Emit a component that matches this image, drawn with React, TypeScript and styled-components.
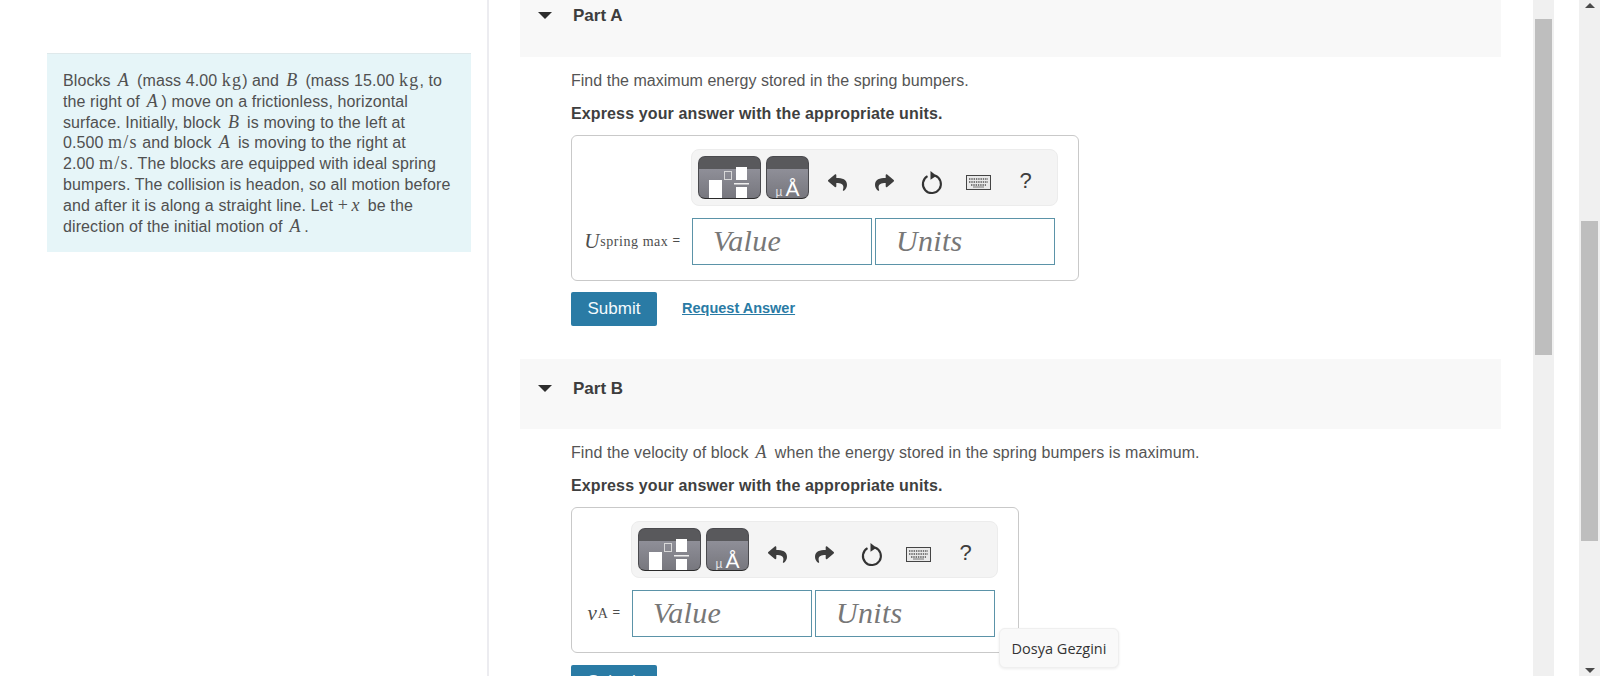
import React from "react";
import styled, { createGlobalStyle } from "styled-components";
import { FaReply, FaShare } from "react-icons/fa";

const GlobalStyle = createGlobalStyle`
  html, body {
    margin: 0;
    padding: 0;
    height: 676px;
    overflow: hidden;
    background: #fff;
    font-family: "Liberation Sans", Arial, sans-serif;
    color: #4a4a4a;
  }
`;

const Page = styled.div`
  position: relative;
  display: flex;
  width: 1600px;
  height: 676px;
  overflow: hidden;
`;

const Aside = styled.aside`
  width: 487px;
  flex: none;
  padding: 53px 16px 0 47px;
  box-sizing: border-box;
`;

const Scenario = styled.div`
  height: 199px;
  box-sizing: border-box;
  padding: 17px 0 0 16px;
  background: #e6f5f8;
  border-top: 1px solid #dfe9eb;
  font-size: 16px;
  letter-spacing: 0.1px;
  color: #505050;
`;

const Line = styled.div`
  height: 20.8px;
  line-height: 20.8px;
  white-space: nowrap;
`;

const Tex = styled.span`
  font-family: "Liberation Serif", "Times New Roman", serif;
  font-size: 18px;
  line-height: 0;
  letter-spacing: 1.2px;
`;

const TexItalic = styled(Tex)`
  font-style: italic;
  padding: 0 2.5px;
`;

const Main = styled.main`
  width: 1013px;
  flex: none;
  height: 676px;
  border-left: 2px solid #ececf0;
  padding-left: 31px;
  overflow: hidden;
`;

const Part = styled.section`
  width: 981px;
`;

const PartHeader = styled.header<{ $cut?: boolean }>`
  display: flex;
  align-items: flex-start;
  height: 70px;
  margin-top: ${(p) => (p.$cut ? "-13px" : "0")};
  padding-top: ${(p) => (p.$cut ? "19px" : "20px")};
  box-sizing: border-box;
  background: #f8f8f8;
  font-size: 17px;
  line-height: 20px;
  font-weight: 700;
  color: #3d3d3d;
`;

const Caret = styled.span`
  width: 0;
  height: 0;
  margin: 6px 21px 0 18px;
  border-left: 7px solid transparent;
  border-right: 7px solid transparent;
  border-top: 7px solid #2d2d2d;
`;

const PartBody = styled.div`
  padding: 14px 0 0 51px;
`;

const Prompt = styled.p<{ $spacing: number }>`
  margin: 0;
  font-size: 16px;
  line-height: 20px;
  letter-spacing: ${(p) => p.$spacing}px;
  color: #555;
`;

const Instruction = styled.p`
  margin: 12.5px 0 0;
  font-size: 16px;
  line-height: 20px;
  letter-spacing: 0.13px;
  font-weight: 700;
  color: #3f3f3f;
`;

const AnswerBox = styled.div`
  display: inline-flex;
  align-items: flex-end;
  margin-top: 11.5px;
  padding: 13px 20px 15px 0;
  border: 1px solid #c9c9c9;
  border-radius: 6px;
  box-sizing: border-box;
  height: 146px;
`;

const AnswerLabel = styled.div<{ $width: number }>`
  display: flex;
  justify-content: flex-end;
  align-items: center;
  box-sizing: border-box;
  width: ${(p) => p.$width}px;
  height: 47px;
  padding-right: 11px;
  white-space: nowrap;
  color: #4d4d4d;
  font-family: "Liberation Serif", "Times New Roman", serif;
  font-size: 21px;
`;

const Sub = styled.sub`
  font-size: 14px;
  line-height: 0;
  letter-spacing: 0.55px;
  vertical-align: -4px;
  font-style: normal;
  margin-left: 1px;
`;

const Equals = styled.span`
  font-family: "Liberation Sans", Arial, sans-serif;
  font-size: 13px;
  margin-left: 4px;
  position: relative;
  top: -2px;
`;

const Editor = styled.div`
  display: flex;
  flex-direction: column;
  gap: 12px;
`;

const Toolbar = styled.div`
  display: flex;
  align-items: center;
  width: 367px;
  height: 57px;
  box-sizing: border-box;
  padding-left: 6px;
  background: #f4f4f4;
  border: 1px solid #ececec;
  border-radius: 8px;
`;

const TemplateButton = styled.div<{ $width: number }>`
  display: flex;
  align-items: flex-end;
  justify-content: center;
  width: ${(p) => p.$width}px;
  height: 43px;
  margin-right: 5px;
  box-sizing: border-box;
  border-radius: 7px;
  border: 1px solid #4a4a4e;
  border-bottom: 1.5px solid #2a2a2a;
  overflow: hidden;
  background: linear-gradient(#59595c 0 12px, #8f8f98 12px, #77777e 100%);
`;

const UnitGlyphs = styled.span`
  font-family: "Liberation Sans", Arial, sans-serif;
  color: #fff;
  line-height: 22px;
  white-space: nowrap;
  margin-bottom: -5px;
`;

const Micro = styled.span`
  font-size: 12px;
  margin-right: 3px;
  opacity: 0.8;
`;

const Angstrom = styled.span`
  font-size: 21px;
`;

const ToolIcon = styled.div<{ $big?: boolean }>`
  display: flex;
  align-items: center;
  justify-content: center;
  width: 47px;
  height: 30px;
  margin-top: ${(p) => (p.$big ? "7px" : "10px")};
  color: #3d3d3d;
  font-size: ${(p) => (p.$big ? "22px" : "19px")};
`;

const Fields = styled.div`
  display: flex;
  gap: 3px;
  padding-left: 1px;
`;

const Field = styled.input`
  width: 180px;
  height: 47px;
  box-sizing: border-box;
  padding: 0 0 2px 20px;
  border: 1px solid #5b93a8;
  border-radius: 0;
  outline: none;
  background: #fff;
  font-family: "Liberation Serif", "Times New Roman", serif;
  font-style: italic;
  font-size: 30px;
  letter-spacing: 0.3px;
  &::placeholder {
    color: #777;
    opacity: 1;
  }
`;

const Actions = styled.div<{ $top: number }>`
  display: flex;
  align-items: center;
  gap: 25px;
  margin-top: ${(p) => p.$top}px;
  height: 34px;
`;

const Submit = styled.button`
  width: 86px;
  height: 34px;
  padding: 0;
  border: 0;
  border-radius: 2px;
  background: #2a7ba5;
  color: #f4fafd;
  font-family: "Liberation Sans", Arial, sans-serif;
  font-size: 17px;
`;

const RequestLink = styled.a`
  color: #2a7ba5;
  font-size: 14.5px;
  font-weight: 700;
  text-decoration: underline;
  position: relative;
  top: -1px;
`;

const PartGap = styled.div`
  height: 33px;
`;

const Track = styled.div<{ $width: number }>`
  width: ${(p) => p.$width}px;
  flex: none;
  height: 676px;
  background: #f0f0f0;
  display: flex;
  flex-direction: column;
  align-items: center;
`;

const Thumb = styled.div<{ $top: number; $height: number }>`
  width: 17px;
  height: ${(p) => p.$height}px;
  margin-top: ${(p) => p.$top}px;
  background: #bebebe;
`;

const InnerBar = styled(Track)`
  margin-right: 25px;
`;

const OuterBar = styled(Track)`
  position: relative;
`;

const ArrowUp = styled.span`
  position: absolute;
  top: 3px;
  width: 0;
  height: 0;
  border-left: 5px solid transparent;
  border-right: 5px solid transparent;
  border-bottom: 5px solid #4a4a4a;
`;

const ArrowDown = styled.span`
  position: absolute;
  bottom: 3px;
  width: 0;
  height: 0;
  border-left: 5px solid transparent;
  border-right: 5px solid transparent;
  border-top: 5px solid #4a4a4a;
`;

const Tooltip = styled.div`
  position: absolute;
  left: 999px;
  top: 628px;
  width: 120px;
  height: 40px;
  box-sizing: border-box;
  display: flex;
  align-items: center;
  justify-content: center;
  background: #f9f9f9;
  border: 1px solid #efefef;
  border-radius: 6px;
  box-shadow: 0 1px 3px rgba(0, 0, 0, 0.08);
  font-family: "Open Sans", "Noto Sans", sans-serif;
  font-size: 14.5px;
  color: #333;
`;

const TemplateIcon = () => (
  <svg width="61" height="42" viewBox="0 0 61 42" fill="none">
    <rect x="10" y="24" width="13" height="18" fill="#fff" />
    <rect x="25.5" y="15.5" width="7" height="8" stroke="#d8d8d8" />
    <rect x="37" y="11" width="11" height="13" fill="#fff" />
    <rect x="35" y="27" width="15" height="1.5" fill="#eee" />
    <rect x="37" y="31" width="11" height="11" fill="#fff" />
  </svg>
);

const ResetIcon = () => (
  <svg width="22" height="24" viewBox="0 0 22 24" fill="none">
    <path d="M6.5 5.2A9 9 0 1 0 14 4.6" stroke="#333" strokeWidth="2.1" />
    <path d="M9.5 0 L15.5 4.8 L9.5 8.8 Z" fill="#333" />
  </svg>
);

const KeyboardIcon = () => (
  <svg width="25" height="15" viewBox="0 0 25 15" fill="none">
    <rect x="0.5" y="0.5" width="24" height="14" fill="#e9e9e9" stroke="#444" />
    <path
      d="M3 4h19M3 7h19M5 10h15"
      stroke="#555"
      strokeWidth="1.6"
      strokeDasharray="1.4 0.9"
    />
    <path d="M7 12h11" stroke="#777" />
  </svg>
);

const AnswerEditor = () => (
  <Editor>
    <Toolbar>
      <TemplateButton $width={63}>
        <TemplateIcon />
      </TemplateButton>
      <TemplateButton $width={43}>
        <UnitGlyphs>
          <Micro>µ</Micro>
          <Angstrom>Å</Angstrom>
        </UnitGlyphs>
      </TemplateButton>
      <ToolIcon>
        <FaReply />
      </ToolIcon>
      <ToolIcon>
        <FaShare />
      </ToolIcon>
      <ToolIcon>
        <ResetIcon />
      </ToolIcon>
      <ToolIcon>
        <KeyboardIcon />
      </ToolIcon>
      <ToolIcon $big>?</ToolIcon>
    </Toolbar>
    <Fields>
      <Field placeholder="Value" readOnly />
      <Field placeholder="Units" readOnly />
    </Fields>
  </Editor>
);

export default function App() {
  return (
    <Page>
      <GlobalStyle />
      <Aside>
        <Scenario>
          <Line>
            Blocks <TexItalic>A</TexItalic> (mass 4.00 <Tex>kg</Tex>) and{" "}
            <TexItalic>B</TexItalic> (mass 15.00 <Tex>kg</Tex>, to
          </Line>
          <Line>
            the right of <TexItalic>A</TexItalic>) move on a frictionless, horizontal
          </Line>
          <Line>
            surface. Initially, block <TexItalic>B</TexItalic> is moving to the left at
          </Line>
          <Line>
            0.500 <Tex>m/s</Tex> and block <TexItalic>A</TexItalic> is moving to the right at
          </Line>
          <Line>
            2.00 <Tex>m/s</Tex>. The blocks are equipped with ideal spring
          </Line>
          <Line>bumpers. The collision is headon, so all motion before</Line>
          <Line>
            and after it is along a straight line. Let <Tex>+</Tex>
            <TexItalic>x</TexItalic> be the
          </Line>
          <Line>
            direction of the initial motion of <TexItalic>A</TexItalic>.
          </Line>
        </Scenario>
      </Aside>
      <Main>
        <Part>
          <PartHeader $cut>
            <Caret />
            Part A
          </PartHeader>
          <PartBody>
            <Prompt $spacing={0.02}>Find the maximum energy stored in the spring bumpers.</Prompt>
            <Instruction>Express your answer with the appropriate units.</Instruction>
            <AnswerBox>
              <AnswerLabel $width={119}>
                <i>U</i>
                <Sub>spring max</Sub>
                <Equals>=</Equals>
              </AnswerLabel>
              <AnswerEditor />
            </AnswerBox>
            <Actions $top={11}>
              <Submit>Submit</Submit>
              <RequestLink href="#">Request Answer</RequestLink>
            </Actions>
          </PartBody>
        </Part>
        <PartGap />
        <Part>
          <PartHeader>
            <Caret />
            Part B
          </PartHeader>
          <PartBody>
            <Prompt $spacing={0.09}>
              Find the velocity of block <TexItalic>A</TexItalic> when the energy stored in the
              spring bumpers is maximum.
            </Prompt>
            <Instruction>Express your answer with the appropriate units.</Instruction>
            <AnswerBox>
              <AnswerLabel $width={59}>
                <i>v</i>
                <Sub>A</Sub>
                <Equals>=</Equals>
              </AnswerLabel>
              <AnswerEditor />
            </AnswerBox>
            <Actions $top={12}>
              <Submit>Submit</Submit>
              <RequestLink href="#">Request Answer</RequestLink>
            </Actions>
          </PartBody>
        </Part>
      </Main>
      <InnerBar $width={21}>
        <Thumb $top={19} $height={336} />
      </InnerBar>
      <OuterBar $width={21}>
        <ArrowUp />
        <Thumb $top={221} $height={320} />
        <ArrowDown />
      </OuterBar>
      <Tooltip>Dosya Gezgini</Tooltip>
    </Page>
  );
}
